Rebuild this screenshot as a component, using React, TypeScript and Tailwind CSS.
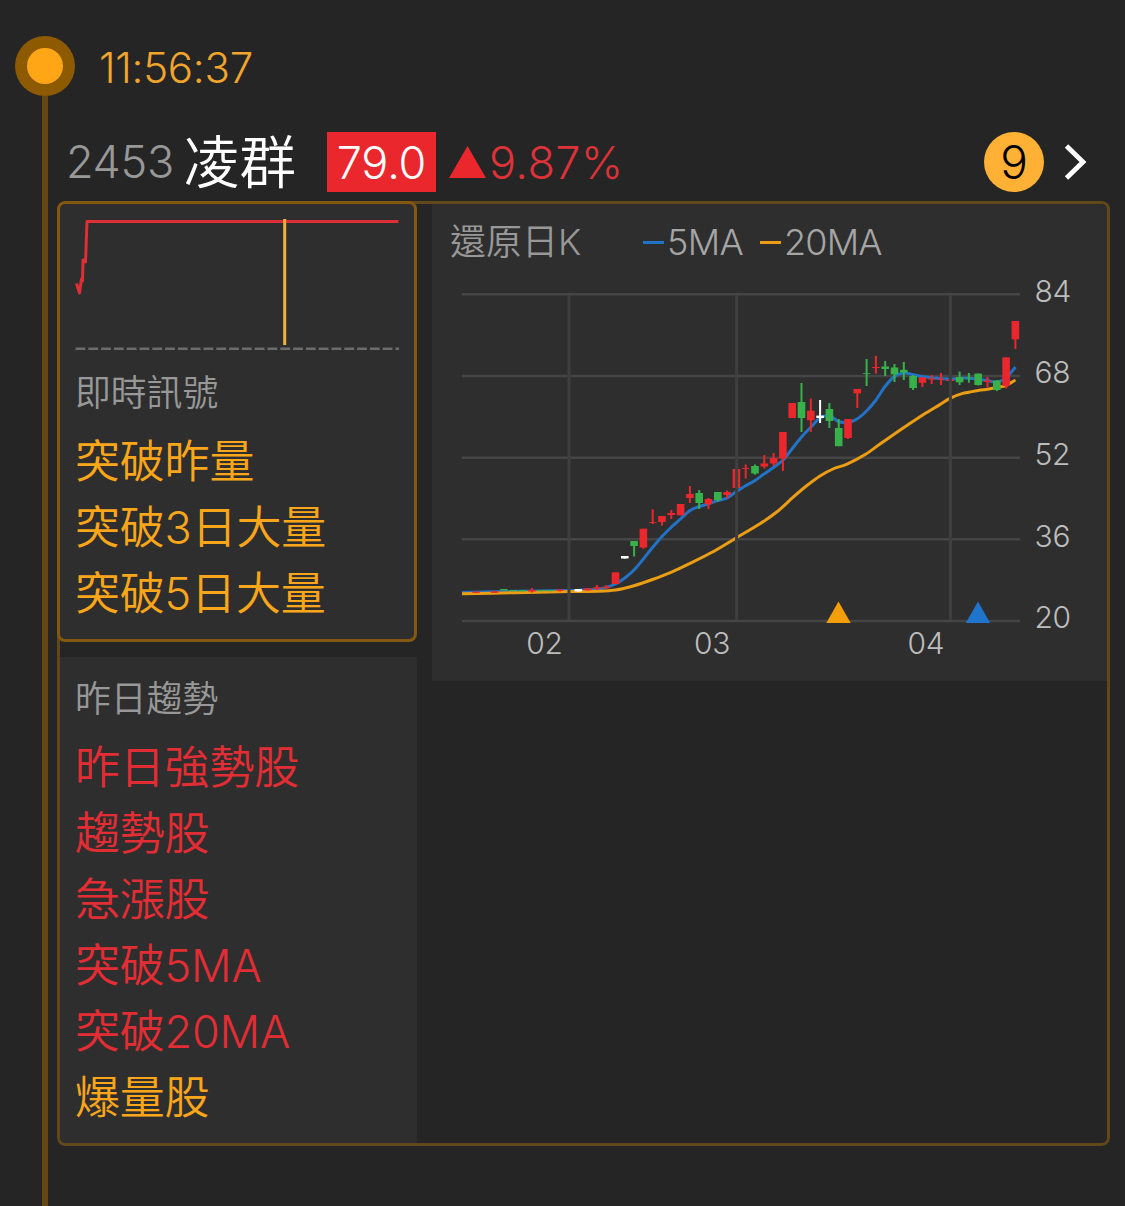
const RED = "#e9272d";
const GREEN = "#37b24a";
const WHITE = "#ffffff";

// [high, body top, body bottom, low, colour]
type Candle = [number, number, number, number, string];

const FIRST_X = 466.7;
const STEP = 9.3;

const candles: (Candle | null)[] = [
  null,
  [591.6, 591.6, 592.8, 592.8, RED],
  null,
  [591.2, 591.2, 592.8, 592.8, RED],
  [589, 589, 590.4, 590.4, GREEN],
  [590, 590, 591.2, 591.2, GREEN],
  [590.2, 590.2, 591.4, 591.4, GREEN],
  [588, 590, 591.5, 592.5, RED],
  [590, 590, 591.2, 591.2, GREEN],
  [590.2, 590.2, 591.2, 591.2, GREEN],
  [589.2, 589.6, 590.8, 591.5, RED],
  null,
  [589, 589, 591.5, 591.5, WHITE],
  [588.4, 588.4, 590.4, 590.4, RED],
  [585, 587.2, 588.8, 590, RED],
  [585.2, 586.6, 588.2, 588.5, RED],
  [572.3, 572.3, 584, 584, RED],
  [556, 556, 558.5, 558.5, WHITE],
  [541, 541, 546, 556.5, GREEN],
  [528.7, 528.7, 547.5, 548.8, RED],
  [509.3, 522, 522.8, 524, RED],
  [516, 516, 522, 525.6, RED],
  [510, 513, 515, 519, RED],
  [504, 504, 515.3, 515.3, RED],
  [486, 494, 498, 503, RED],
  [490, 493, 503, 509, GREEN],
  [498, 499, 504.3, 509, RED],
  [492, 492, 500, 501.5, GREEN],
  [490.5, 492, 495, 498.5, RED],
  [469, 469, 488, 488, RED],
  [464.5, 468, 468.9, 478.5, RED],
  [464.5, 466, 473.5, 474.7, GREEN],
  [455, 463.5, 466.5, 468.5, RED],
  [453, 458, 463.5, 466, RED],
  [432, 432, 458.5, 471, RED],
  [403, 403, 418, 418, RED],
  [383, 402, 418, 432, GREEN],
  [398.5, 410.7, 420.3, 432, RED],
  [400, 415.6, 418, 423, WHITE],
  [403, 409, 421, 428, GREEN],
  [419, 428, 446.2, 446.2, GREEN],
  [419, 419, 438, 439, RED],
  [389, 389, 393.4, 408, RED],
  [359, 373, 373.8, 386, GREEN],
  [355.8, 367, 368, 373.6, RED],
  [361, 366.5, 369, 376, GREEN],
  [364, 367.5, 374.3, 382, GREEN],
  [362, 369.8, 372.5, 380, GREEN],
  [375, 376, 388, 390, GREEN],
  [377, 377.5, 382.8, 387, RED],
  [375, 378.6, 379.5, 384, RED],
  [373, 378.7, 379.6, 385, RED],
  [379.5, 379.5, 381, 381, RED],
  [371.5, 377, 382.3, 385, GREEN],
  [373, 377.6, 378.4, 382.7, GREEN],
  [373.6, 373.6, 385, 385.5, GREEN],
  [377, 380.6, 382, 387, RED],
  [380, 380.6, 390, 391, GREEN],
  [357.4, 357.4, 386, 388.5, RED],
  [321, 321, 339.3, 349, RED],
];

type Point = [number, number];

const ma5: Point[] = [
  [462, 592.6], [515, 591.3], [569, 590.6], [597, 589.2], [606, 587.5], [615.5, 584],
  [624.8, 578], [634, 570], [643, 559.5], [652.5, 547.5], [662, 536.5], [671, 527.5],
  [680.5, 519], [690, 510.5], [699, 506.5], [708.5, 503.8], [718, 500.5], [727, 498],
  [736.5, 491.5], [746, 485.5], [755, 480.5], [764, 474], [773.5, 467.5], [783, 460],
  [792, 449], [801.5, 437], [811, 427], [820, 418], [829.5, 415.8], [838.5, 421.5],
  [848, 422.5], [857, 419], [866.5, 411], [876, 400], [885, 386.5], [894.5, 376.5],
  [904, 373], [913, 374.6], [922.5, 376.6], [932, 377.7], [941, 378.4], [950.5, 379.2],
  [959.5, 378.2], [969, 378.2], [978, 379.2], [987.5, 380.6], [997, 382.2], [1006, 378],
  [1015.5, 367],
];

const ma20: Point[] = [
  [462, 593.8], [515, 592.7], [569, 591.6], [597, 591.2], [615.5, 590], [634, 585.7],
  [652.5, 579.5], [671, 572.3], [690, 563.3], [713, 551.7], [736.5, 537.7], [760, 523.8],
  [778, 511], [792, 498.2], [806, 486.3], [820, 476], [834, 468.5], [847, 464.2],
  [866, 454], [880, 444], [894, 434.3], [908, 424.8], [922, 415.5], [936, 407],
  [950, 398.3], [962, 393.6], [978, 390.5], [987.5, 389.3], [997, 387.5], [1006, 385.5],
  [1015.5, 380],
];

function smooth(points: Point[]) {
  let d = `M${points[0][0]} ${points[0][1]}`;
  for (let i = 0; i < points.length - 1; i++) {
    const a = points[Math.max(i - 1, 0)];
    const b = points[i];
    const c = points[i + 1];
    const e = points[Math.min(i + 2, points.length - 1)];
    const t = 0.15;
    d += `C${b[0] + (c[0] - a[0]) * t} ${b[1] + (c[1] - a[1]) * t} ${c[0] - (e[0] - b[0]) * t} ${c[1] - (e[1] - b[1]) * t} ${c[0]} ${c[1]}`;
  }
  return d;
}

function KChart() {
  const levels: [number, string][] = [
    [294.3, "84"], [376, "68"], [457.7, "52"], [539.3, "36"], [621, "20"],
  ];
  const months: [number, string][] = [
    [569, "02"], [736.6, "03"], [950.4, "04"],
  ];
  return (
    <svg width="678" height="410" viewBox="432 270 678 410" className="block">
      {levels.map(([y]) => (
        <line key={y} x1="462" x2="1020" y1={y} y2={y} stroke="#454545" strokeWidth="2.6" />
      ))}
      <path d={smooth(ma5)} fill="none" stroke="#2272c6" strokeWidth="3" />
      <path d={smooth(ma20)} fill="none" stroke="#eb9d13" strokeWidth="3" />
      {candles.map((c, i) => {
        if (!c) return null;
        const x = FIRST_X + STEP * i;
        const [high, top, bottom, low, fill] = c;
        return (
          <g key={i} fill={fill}>
            <rect x={x - 1} y={high} width="2" height={low - high} />
            <rect x={x - 3.8} y={top} width="7.6" height={bottom - top} />
          </g>
        );
      })}
      {months.map(([x]) => (
        <line key={x} x1={x} x2={x} y1="295" y2="620" stroke="#3f3f3f" strokeWidth="3" />
      ))}
      <path d="M838.5 601.5l12.2 21.5h-24.4z" fill="#f39f0c" />
      <path d="M978 601.5l12.2 21.5h-24.4z" fill="#1f74cb" />
      <g fill="#bdbdbd" className="text-[30px] font-light tracking-[-0.3px]">
        {levels.map(([y, t]) => (
          <text key={t} x="1034.5" y={y + 7.4}>{t}</text>
        ))}
        {months.map(([x, t]) => (
          <text key={t} x={x - 24.5} y="653.5" textAnchor="middle">{t}</text>
        ))}
      </g>
    </svg>
  );
}

function IntradayChart() {
  return (
    <svg width="324" height="140" viewBox="75 214 324 140" className="block">
      <path
        d="M76.5 283.5L79.5 293L81.5 279L82.5 281L83 260L85.5 262L87 221.5H398.5"
        fill="none"
        stroke="#dc2f36"
        strokeWidth="3"
        strokeLinejoin="round"
      />
      <path d="M284.7 219V345" stroke="#f4ae3e" strokeWidth="3" />
      <path d="M75.5 348.7H399" stroke="#6b6b6b" strokeWidth="2.6" strokeDasharray="9.8 3" />
    </svg>
  );
}

function Signals({ title, items }: { title: string; items: [string, string][] }) {
  return (
    <>
      <h3 className="text-[35.8px] leading-[50px] text-[#989898]">{title}</h3>
      <ul className="mt-[11px]">
        {items.map(([text, color]) => (
          <li key={text} className={`h-[66px] whitespace-nowrap text-[45px] leading-[66px] tracking-[-0.2px] ${color}`}>
            {text}
          </li>
        ))}
      </ul>
    </>
  );
}

export default function App() {
  const amber = "text-[#faa61a]";
  const red = "text-[#e32d34]";
  return (
    <main className="flex h-[1206px] w-[1125px] overflow-hidden bg-[#252525] pl-[15px] pt-[36px] font-['Inter','Noto_Sans_CJK_TC',sans-serif] font-[350]">
      <div className="flex w-[60px] shrink-0 flex-col items-center">
        <div className="flex size-[60px] shrink-0 items-center justify-center rounded-full bg-[#8d5a00]">
          <div className="size-[36px] rounded-full bg-[#ffa616]" />
        </div>
        <div className="w-[6px] flex-1 bg-[#674812]" />
      </div>

      <div className="-ml-[18px] w-[1053px] shrink-0">
        <time className="block h-[60px] pl-[42px] text-[42px] leading-[64px] tracking-[-0.25px] text-[#f1a52c]">11:56:37</time>

        <header className="mt-[36px] flex h-[60px] items-center">
          <span className="w-[126px] pl-[9px] text-[45px] font-light leading-[60px] tracking-[-0.3px] text-[#989898]">2453</span>
          <h1 className="w-[144px] whitespace-nowrap pt-[2px] text-[56.5px] leading-[60px] text-white">凌群</h1>
          <span className="flex h-[60px] w-[109px] items-center justify-center bg-[#eb272e] pt-[1px] text-[45px] leading-[60px] tracking-[-0.1px] text-white">79.0</span>
          <svg width="38" height="34" viewBox="0 0 38 34" className="ml-[13px]">
            <path d="M18.5 1L37 33H0z" fill="#eb272e" />
          </svg>
          <span className="ml-[2px] pt-[2px] text-[45px] font-light leading-[60px] tracking-[0.4px] text-[#dc3238]">9.87%</span>
          <span className="ml-auto flex size-[60px] items-center justify-center rounded-full bg-[#ffb136] text-[46px] font-light leading-[60px] text-black">9</span>
          <svg width="26" height="40" viewBox="0 0 26 40" className="ml-[19px] mr-[21px]">
            <path d="M3.5 4L20 20L3.5 36" fill="none" stroke="#fff" strokeWidth="4.8" />
          </svg>
        </header>

        <article className="relative mt-[9px] flex h-[945px] w-[1053px] gap-[15px] overflow-hidden rounded-[8px]">
          <div className="flex w-[360px] flex-col gap-[15px]">
            <section className="relative z-10 h-[441px] rounded-[8px] border-[3px] border-[#84590f] bg-[#2e2e2e] pl-[15px] pt-[10px]">
              <IntradayChart />
              <div className="mt-[14px]">
                <Signals
                  title="即時訊號"
                  items={[["突破昨量", amber], ["突破3日大量", amber], ["突破5日大量", amber]]}
                />
              </div>
            </section>
            <section className="flex-1 bg-[#2e2e2e] pl-[18px] pt-[17px]">
              <Signals
                title="昨日趨勢"
                items={[
                  ["昨日強勢股", red],
                  ["趨勢股", red],
                  ["急漲股", red],
                  ["突破5MA", red],
                  ["突破20MA", red],
                  ["爆量股", amber],
                ]}
              />
            </section>
          </div>
          <section className="h-[480px] w-[678px] bg-[#2e2e2e]">
            <div className="flex h-[69px] items-center pl-[18px] pt-[13px] text-[36px] leading-[50px] text-[#989898]">
              <h2 className="w-[193px] whitespace-nowrap">還原日K</h2>
              <span className="h-[3px] w-[21px] bg-[#2272c6]" />
              <span className="ml-[3px] w-[93px] whitespace-nowrap font-light tracking-[-0.6px] text-[#a5a5a5]">5MA</span>
              <span className="h-[3px] w-[21px] bg-[#eb9d13]" />
              <span className="ml-[3px] whitespace-nowrap font-light tracking-[-0.8px] text-[#a5a5a5]">20MA</span>
            </div>
            <KChart />
          </section>
          <div className="pointer-events-none absolute inset-0 rounded-[8px] border-[3px] border-[#614719]" />
        </article>
      </div>
    </main>
  );
}
